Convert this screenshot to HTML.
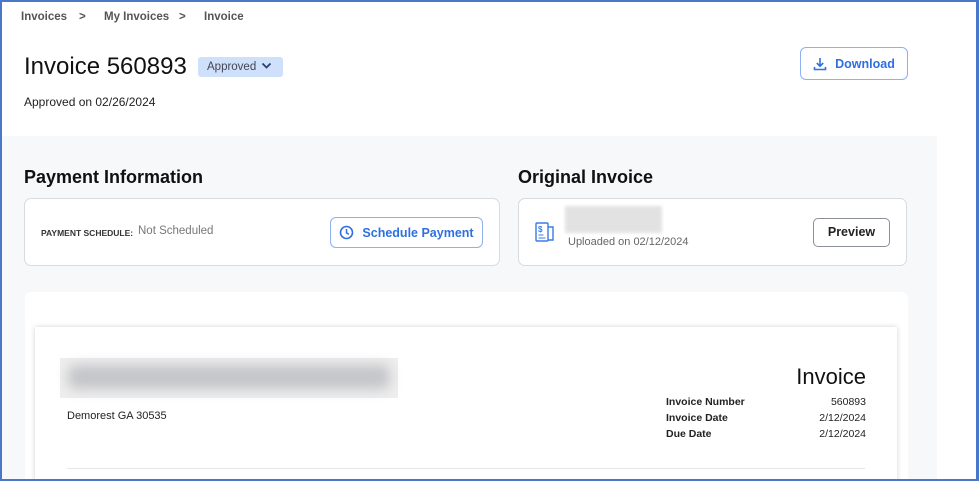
<!DOCTYPE html>
<html><head><meta charset="utf-8"><style>
*{box-sizing:border-box;margin:0;padding:0}
html,body{width:979px;height:481px;overflow:hidden}
body{background:#fff;font-family:"Liberation Sans",sans-serif;position:relative;color:#1a1a1a}
.frame{position:absolute;left:0;top:0;width:979px;height:481px;border:2px solid #4a78c8;border-right-width:3px;pointer-events:none;z-index:10}
.abs{position:absolute}
.crumb{top:11px;font-size:11.5px;color:#555;font-weight:bold}
.gray{left:2px;top:136px;width:935px;height:345px;background:#f7f8fa}
.card{background:#fff;border:1px solid #d8dbe0;border-radius:7px}
.btn{border:1px solid #8fb0f0;border-radius:6px;background:#fff;color:#2f6fe0;font-weight:bold;font-size:12.5px;display:flex;align-items:center;justify-content:center;gap:8px}
h2{font-size:18px;font-weight:bold;color:#111;position:absolute}
</style></head><body>
<div class="frame"></div>
<div class="abs crumb" style="left:21px">Invoices</div>
<div class="abs crumb" style="left:79px">&gt;</div>
<div class="abs crumb" style="left:104px">My Invoices</div>
<div class="abs crumb" style="left:179px">&gt;</div>
<div class="abs crumb" style="left:204px">Invoice</div>
<div class="abs" style="left:24px;top:53px;font-size:24px;color:#111">Invoice 560893</div>
<div class="abs" style="left:198px;top:57px;width:85px;height:20px;background:#cfe0fb;border-radius:3px;font-size:11.5px;color:#445;padding:4px 0 0 9px">Approved <svg width="11" height="8" viewBox="0 0 11 8" style="margin-left:2px"><path d="M1.5 1.5l4 4 4-4" fill="none" stroke="#2a4070" stroke-width="1.8"/></svg></div>
<div class="abs" style="left:24px;top:95px;font-size:12px;color:#222">Approved on 02/26/2024</div>
<div class="abs btn" style="left:800px;top:47px;width:108px;height:33px"><svg width="14" height="14" viewBox="0 0 14 14"><path d="M7 1v8M3.8 6l3.2 3.2L10.2 6M1.5 10v2.5h11V10" fill="none" stroke="#2f6fe0" stroke-width="1.6"/></svg>Download</div>
<div class="abs gray"></div>
<h2 style="left:24px;top:167px">Payment Information</h2>
<h2 style="left:518px;top:167px">Original Invoice</h2>
<div class="abs card" style="left:24px;top:198px;width:476px;height:68px"></div>
<div class="abs" style="left:41px;top:228px;font-size:8.5px;font-weight:bold;color:#333">PAYMENT SCHEDULE:</div>
<div class="abs" style="left:138px;top:225px;font-size:11.5px;color:#777">Not Scheduled</div>
<div class="abs btn" style="left:330px;top:217px;width:153px;height:31px"><svg width="15" height="15" viewBox="0 0 15 15"><circle cx="7.5" cy="7.5" r="6" fill="none" stroke="#2f6fe0" stroke-width="1.6"/><path d="M7.5 4v3.8l2.3 1.6" fill="none" stroke="#2f6fe0" stroke-width="1.5"/></svg>Schedule Payment</div>
<div class="abs card" style="left:518px;top:198px;width:389px;height:68px"></div>
<svg class="abs" style="left:535px;top:222px" width="21" height="21" viewBox="0 0 21 21"><rect x="1" y="1" width="12" height="18" rx="1" fill="none" stroke="#3a7be8" stroke-width="1.4"/><path d="M13 5h5v13h-5" fill="none" stroke="#3a7be8" stroke-width="1.4"/><text x="3" y="10" font-size="8" font-family="Liberation Sans" fill="#3a7be8" font-weight="bold">$</text><path d="M3.5 13h5M3.5 16h7" stroke="#3a7be8" stroke-width="1"/></svg>
<div class="abs" style="left:565px;top:206px;width:97px;height:27px;background:#e2e2e2;filter:blur(1.5px)"></div>
<div class="abs" style="left:568px;top:236px;font-size:11px;color:#666">Uploaded on 02/12/2024</div>
<div class="abs" style="left:813px;top:218px;width:77px;height:29px;border:1px solid #8a8f98;border-radius:5px;background:#fff;font-size:12.5px;font-weight:bold;color:#222;text-align:center;line-height:27px">Preview</div>
<div class="abs" style="left:25px;top:292px;width:883px;height:200px;background:#fff;border-radius:6px"></div>
<div class="abs" style="left:35px;top:327px;width:862px;height:170px;background:#fff;box-shadow:0 0 5px rgba(0,0,0,.18)"></div>
<div class="abs" style="left:60px;top:358px;width:338px;height:40px;background:#eee"></div>
<div class="abs" style="left:68px;top:365px;width:322px;height:24px;background:#c4c5c8;filter:blur(6px);border-radius:8px"></div>
<div class="abs" style="left:67px;top:410px;font-size:11px;color:#222">Demorest GA 30535</div>
<div class="abs" style="left:700px;top:364px;width:166px;text-align:right;font-size:22px;color:#111">Invoice</div>
<div class="abs" style="left:666px;top:394px;font-size:10.5px;font-weight:bold;line-height:16px;color:#222">Invoice Number<br>Invoice Date<br>Due Date</div>
<div class="abs" style="left:766px;top:394px;width:100px;text-align:right;font-size:10.5px;line-height:16px;color:#222">560893<br>2/12/2024<br>2/12/2024</div>
<div class="abs" style="left:67px;top:468px;width:798px;height:1px;background:#e6e6e6"></div>
</body></html>
